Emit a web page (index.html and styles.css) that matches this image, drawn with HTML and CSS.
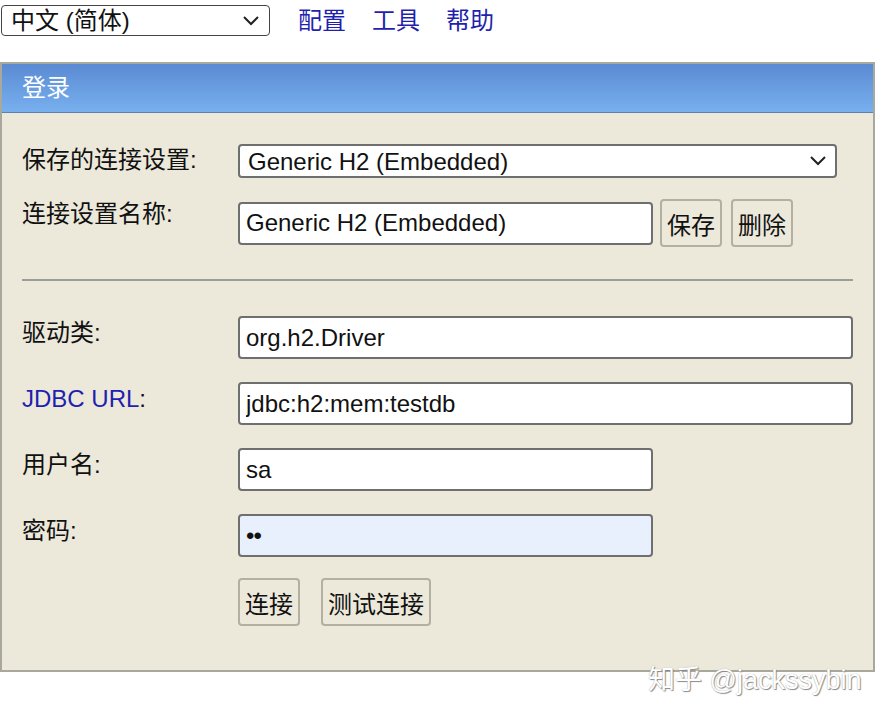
FILE: index.html
```html
<!DOCTYPE html>
<html lang="zh-CN">
  <head>
    <meta charset="UTF-8" />
    <title>H2 Console</title>
    <link rel="stylesheet" href="styles.css">
  </head>
  <body>
    <div class="toolbar">
      <div class="select-wrap lang">
        <select class="lang-select">
          <option>中文 (简体)</option>
          <option>English</option>
        </select>
        <svg class="chevron" width="18" height="12" viewBox="0 0 18 12"><path d="M2 2 L9 9 L16 2" fill="none" stroke="#222" stroke-width="2"/></svg>
      </div>
      <a href="#" class="top-link">配置</a>
      <a href="#" class="top-link">工具</a>
      <a href="#" class="top-link">帮助</a>
    </div>

    <div class="login">
      <div class="login-head">登录</div>
      <div class="login-body">
        <div class="row row-select">
          <label class="label">保存的连接设置:</label>
          <div class="select-wrap setting">
            <select class="setting-select">
              <option>Generic H2 (Embedded)</option>
            </select>
            <svg class="chevron" width="18" height="12" viewBox="0 0 18 12"><path d="M2 2 L9 9 L16 2" fill="none" stroke="#222" stroke-width="2"/></svg>
          </div>
        </div>
        <div class="row row-name">
          <label class="label">连接设置名称:</label>
          <input class="field short" type="text" value="Generic H2 (Embedded)" />
          <button class="btn btn-save">保存</button>
          <button class="btn btn-del">删除</button>
        </div>

        <hr class="divider" />

        <div class="row">
          <label class="label">驱动类:</label>
          <input class="field" type="text" value="org.h2.Driver" />
        </div>
        <div class="row">
          <label class="label"><a href="#" class="jdbc">JDBC URL</a>:</label>
          <input class="field" type="text" value="jdbc:h2:mem:testdb" />
        </div>
        <div class="row">
          <label class="label">用户名:</label>
          <input class="field short" type="text" value="sa" />
        </div>
        <div class="row">
          <label class="label">密码:</label>
          <input class="field short pwd" type="password" value="sa" />
        </div>
        <div class="row row-actions">
          <span class="label"></span>
          <button class="btn">连接</button>
          <button class="btn btn-test">测试连接</button>
        </div>
      </div>
    </div>

    <div class="watermark">知乎 @jackssybin</div>
  </body>
</html>
```

FILE: styles.css
```css
body {
  margin: 0;
  font-family: "Liberation Sans", "Noto Sans CJK SC", sans-serif;
  font-size: 24px;
  color: #111;
  background: #fff;
  position: relative;
  min-height: 718px;
}

.toolbar {
  display: flex;
  align-items: center;
  height: 41px;
  padding-left: 1px;
}
.select-wrap {
  position: relative;
  display: inline-block;
}
.select-wrap select {
  appearance: none;
  -webkit-appearance: none;
  font-family: inherit;
  font-size: 24px;
  color: #111;
  background: #fff;
  margin: 0;
}
.select-wrap .chevron {
  position: absolute;
  top: 50%;
  margin-top: -6px;
  pointer-events: none;
}
.lang .lang-select {
  width: 269px;
  height: 31px;
  border: 1px solid #444;
  border-radius: 4px;
  padding: 0 0 0 9px;
  line-height: 29px;
}
.lang .chevron {
  right: 10px;
}
.top-link {
  color: #1f1fb0;
  text-decoration: none;
  margin-left: 28px;
  line-height: 31px;
}
.top-link + .top-link {
  margin-left: 26px;
}

.login {
  margin-top: 21px;
  width: 871px;
  border: 2px solid #a9a89c;
  background: #ece8da;
}
.login-head {
  height: 48px;
  line-height: 48px;
  padding-left: 20px;
  color: #fff;
  background: linear-gradient(#5a8ad3, #78b0ef);
  border-bottom: 1px solid #5f80ad;
}
.login-body {
  padding: 31px 20px 44px 20px;
}

.row {
  display: flex;
  align-items: flex-start;
  margin-bottom: 23px;
}
.label {
  width: 216px;
  flex: none;
  padding-top: 2px;
  line-height: 30px;
}
.row-select {
  margin-bottom: 21px;
}
.row-select .label {
  padding-top: 1px;
}
.setting .setting-select {
  width: 599px;
  height: 34px;
  border: 2px solid #6f6f6f;
  border-radius: 4px;
  padding: 0 0 0 8px;
}
.setting .chevron {
  right: 10px;
}
.row-name {
  align-items: center;
  margin-bottom: 0;
}
.row-name .label {
  align-self: flex-start;
  padding-top: 0;
}

.field {
  width: 615px;
  height: 43px;
  box-sizing: border-box;
  border: 2px solid #6f6f6f;
  border-radius: 4px;
  background: #fff;
  font-family: inherit;
  font-size: 24px;
  color: #111;
  padding: 0 0 0 6px;
  margin: 0;
}
.field.short {
  width: 415px;
}
.pwd {
  background: #e8f0fe;
  font-size: 24px;
  letter-spacing: -1px;
}

.btn {
  height: 48px;
  box-sizing: border-box;
  border: 2px solid #b4b0a1;
  border-radius: 4px;
  background: #ece8da;
  font-family: inherit;
  font-size: 24px;
  color: #111;
  padding: 0 5px;
  margin: 0;
}
.btn-save {
  margin-left: 7px;
}
.btn-del {
  margin-left: 9px;
}
.btn-test {
  margin-left: 21px;
}
.row-actions {
  margin-bottom: 0;
  margin-top: -2px;
}

.divider {
  border: none;
  height: 2px;
  background: #9d9d98;
  margin: 32px 0 35px 0;
}

.jdbc {
  color: #1f1fb0;
  text-decoration: none;
}

.watermark {
  position: absolute;
  left: 648px;
  top: 658px;
  font-size: 27px;
  color: #fff;
  text-shadow: 1px 1px 1px #8a8a8a, 0 0 1px #999;
  letter-spacing: 0;
}
```
